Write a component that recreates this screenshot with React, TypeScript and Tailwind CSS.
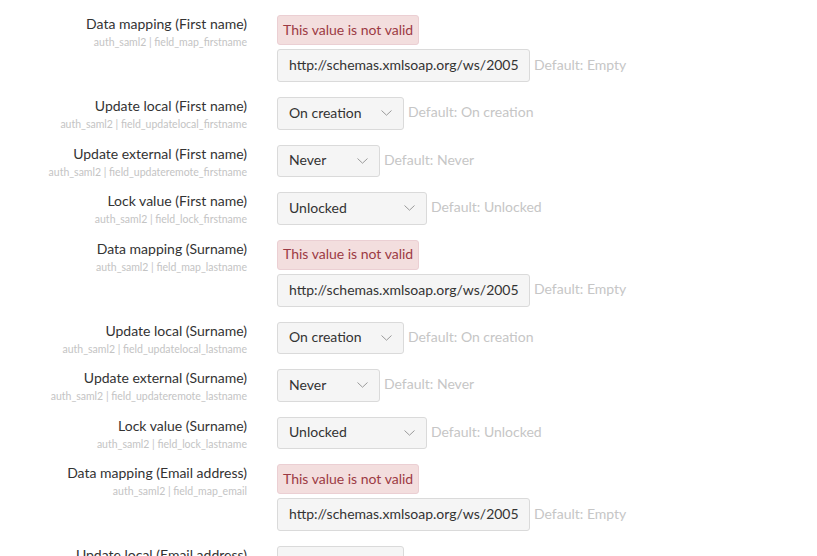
import React from "react";

type Row =
  | { kind: "map"; label: string; sub: string }
  | { kind: "select"; label: string; sub: string; value: string; width: string; def: string };

const groups = [
  { name: "First name", key: "firstname" },
  { name: "Surname", key: "lastname" },
  { name: "Email address", key: "email" },
];

function buildRows(): Row[] {
  const rows: Row[] = [];
  groups.forEach((g) => {
    rows.push({ kind: "map", label: `Data mapping (${g.name})`, sub: `auth_saml2 | field_map_${g.key}` });
    rows.push({
      kind: "select",
      label: `Update local (${g.name})`,
      sub: `auth_saml2 | field_updatelocal_${g.key}`,
      value: "On creation",
      width: "w-[127px]",
      def: "Default: On creation",
    });
    rows.push({
      kind: "select",
      label: `Update external (${g.name})`,
      sub: `auth_saml2 | field_updateremote_${g.key}`,
      value: "Never",
      width: "w-[103px]",
      def: "Default: Never",
    });
    rows.push({
      kind: "select",
      label: `Lock value (${g.name})`,
      sub: `auth_saml2 | field_lock_${g.key}`,
      value: "Unlocked",
      width: "w-[150px]",
      def: "Default: Unlocked",
    });
  });
  return rows;
}

function Chevron() {
  return (
    <svg width="11" height="6" viewBox="0 0 11 6" fill="none" className="shrink-0 mt-[2px]">
      <path d="M0.5 0.5 L5.5 5.2 L10.5 0.5" stroke="#9a9a9a" strokeWidth="1" />
    </svg>
  );
}

function Label({ label, sub }: { label: string; sub: string }) {
  return (
    <div className="w-[248px] shrink-0 text-right pr-[1px]">
      <div className="text-[14px] leading-[18px] text-[#333333]">{label}</div>
      <div className="text-[10.5px] leading-[18px] text-[#c4c4c4] whitespace-nowrap">{sub}</div>
    </div>
  );
}

export default function App() {
  const rows = buildRows();
  return (
    <div
      className="w-[817px] h-[556px] overflow-hidden bg-white pt-[15px]"
      style={{ fontFamily: "Lato, 'Open Sans', sans-serif" }}
    >
      {rows.map((r, i) =>
        r.kind === "map" ? (
          <div key={i} className="flex items-start mb-[15px]">
            <Label label={r.label} sub={r.sub} />
            <div className="ml-[29px] flex flex-col">
              <div className="self-start h-[30px] flex items-center px-[5px] pb-[2px] rounded-[3px] border border-[#ebcfd3] bg-[#f3dede] text-[14px] text-[#9c3a44]">
                This value is not valid
              </div>
              <div className="mt-[4px] flex items-center">
                <div className="w-[253px] h-[33px] flex items-center px-[11px] pb-[2px] rounded-[3px] border border-[#dadada] bg-[#f5f5f5] text-[14px] text-[#333333] whitespace-nowrap overflow-hidden">
                  http://schemas.xmlsoap.org/ws/2005
                </div>
                <span className="ml-[4px] mb-[3px] text-[14px] text-[#c6c6c6]">Default: Empty</span>
              </div>
            </div>
          </div>
        ) : (
          <div key={i} className="flex items-start h-[32.5px] mb-[15px]">
            <Label label={r.label} sub={r.sub} />
            <div className="ml-[29px] flex items-center h-[32.5px]">
              <div
                className={`${r.width} h-[32.5px] flex items-center justify-between pl-[11px] pr-[11px] pb-[2px] rounded-[3px] border border-[#dadada] bg-[#f5f5f5] text-[14px] text-[#333333]`}
              >
                <span>{r.value}</span>
                <Chevron />
              </div>
              <span className="ml-[4px] mb-[3px] text-[14px] text-[#c6c6c6]">{r.def}</span>
            </div>
          </div>
        )
      )}
    </div>
  );
}
